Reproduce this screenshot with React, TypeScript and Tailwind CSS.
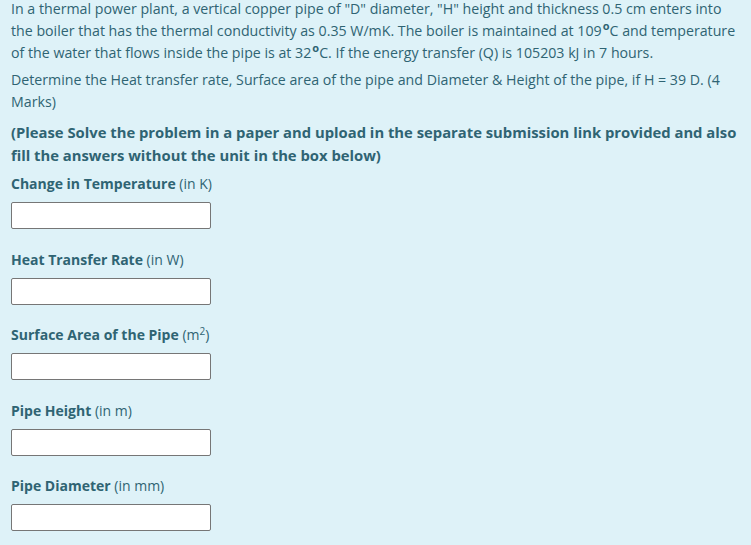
import React from "react";

// answer fields shown under the question text
const fields = [
  { label: "Change in Temperature", unit: "(in K)" },
  { label: "Heat Transfer Rate", unit: "(in W)" },
  { label: "Surface Area of the Pipe", unit: "sq" },
  { label: "Pipe Height", unit: "(in m)" },
  { label: "Pipe Diameter", unit: "(in mm)" },
];

const Deg = () => <sup className="text-[11px] font-bold top-[-0.55em] ml-[1px]">o</sup>;

const App: React.FC = () => {
  return (
    <div
      className="w-[751px] h-[545px] overflow-hidden bg-[#def2f8] px-[11px] text-[14px] text-[#2f6473] leading-[22px]"
      style={{ fontFamily: '"Open Sans", "Noto Sans", sans-serif' }}
    >
      {/* ===== question text ===== */}
      <p className="mt-[-2px] whitespace-nowrap text-[14.2px]">
        In a thermal power plant, a vertical copper pipe of "D" diameter, "H" height and thickness 0.5 cm enters into
        <br />
        the boiler that has the thermal conductivity as 0.35 W/mK. The boiler is maintained at 109
        <Deg />C and temperature
        <br />
        of the water that flows inside the pipe is at 32
        <Deg />C. If the energy transfer (Q) is 105203 kJ in 7 hours.
      </p>
      <p className="mt-[5px] whitespace-nowrap text-[14.2px]">
        Determine the Heat transfer rate, Surface area of the pipe and Diameter &amp; Height of the pipe, if H = 39 D. (4
        <br />
        Marks)
      </p>
      <p className="mt-[8px] font-bold whitespace-nowrap text-[14.8px] leading-[23px]">
        (Please Solve the problem in a paper and upload in the separate submission link provided and also
        <br />
        fill the answers without the unit in the box below)
      </p>

      {/* ===== answer boxes ===== */}
      <div className="mt-[6px]">
        {fields.map((f) => (
          <div key={f.label} className="mb-[19.5px]">
            <div className="mb-[7px]">
              <span className="font-bold">{f.label}</span>{" "}
              {f.unit === "sq" ? (
                <span>
                  (m<sup className="text-[10px]">2</sup>)
                </span>
              ) : (
                <span>{f.unit}</span>
              )}
            </div>
            <input
              type="text"
              className="block w-[200px] h-[27px] bg-white border border-[#767676] rounded-[2px] px-2 text-[14px] outline-none"
            />
          </div>
        ))}
      </div>
    </div>
  );
};

export default App;
